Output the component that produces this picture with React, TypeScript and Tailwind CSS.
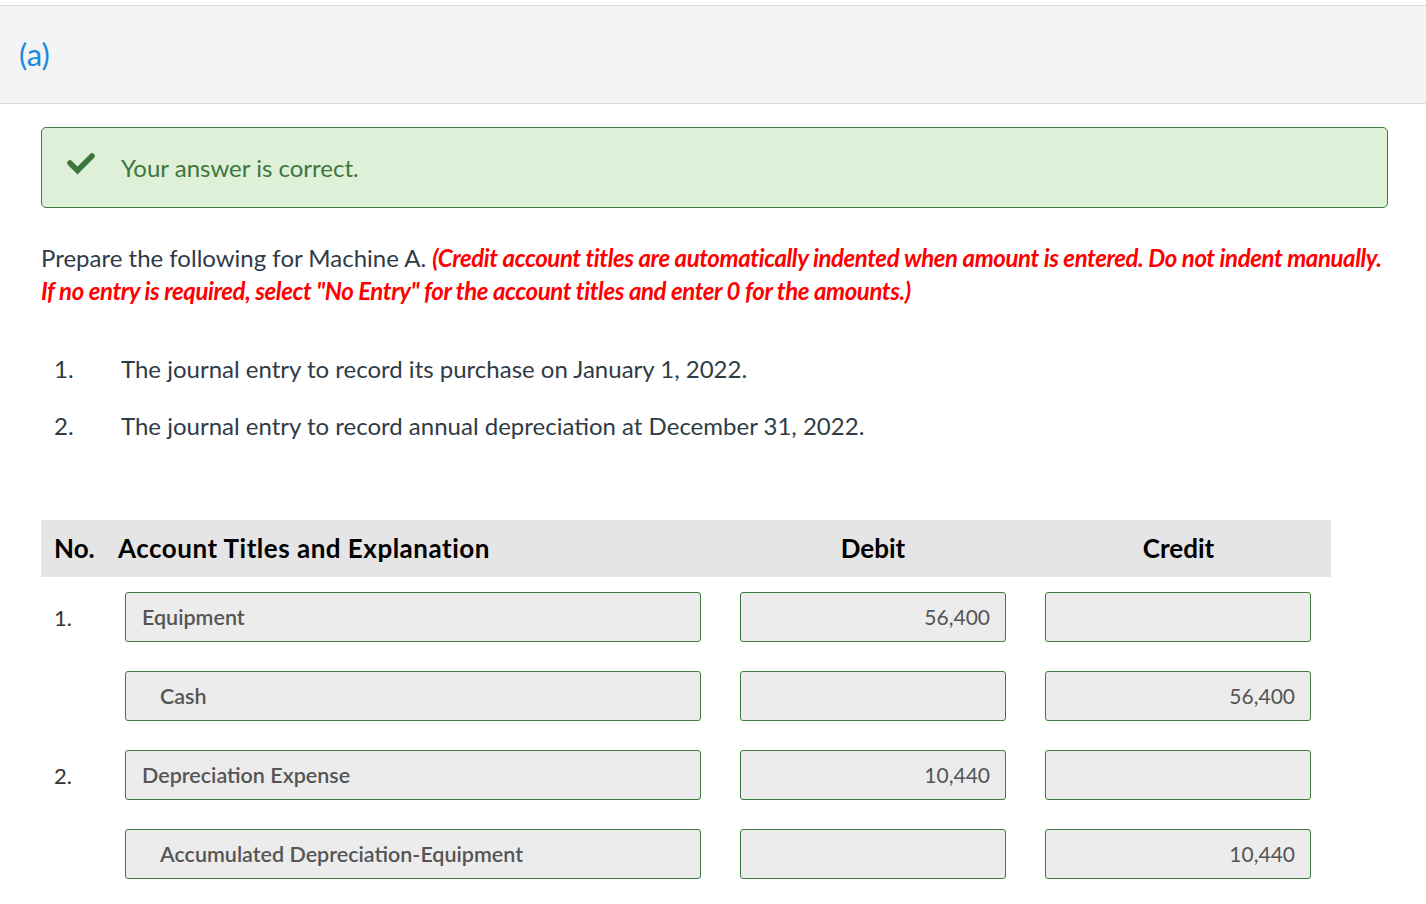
const rows = [
  { no: "1.", account: "Equipment", indent: false, debit: "56,400", credit: "" },
  { no: "", account: "Cash", indent: true, debit: "", credit: "56,400" },
  { no: "2.", account: "Depreciation Expense", indent: false, debit: "10,440", credit: "" },
  { no: "", account: "Accumulated Depreciation-Equipment", indent: true, debit: "", credit: "10,440" },
];

function Field({ children, align = "left", indent = false, bold = false }: { children?: React.ReactNode; align?: "left" | "right"; indent?: boolean; bold?: boolean }) {
  return (
    <div
      className={`h-[50px] flex items-center bg-[#ececec] border border-[#3f7a3f] rounded-[3px] text-[#555] ${
        align === "right" ? "justify-end pr-[15px] text-[21px]" : indent ? "pl-[34px] text-[21.5px]" : "pl-[16px] text-[21.5px]"
      } ${bold ? "font-semibold" : ""}`}
    >
      {children}
    </div>
  );
}

function CheckIcon() {
  return (
    <svg width="30" height="23" viewBox="0 0 30 23" className="-mt-[9px] shrink-0">
      <polyline points="4,11 11.5,18.5 26,4" fill="none" stroke="#3c763d" strokeWidth="5.5" strokeLinecap="round" strokeLinejoin="miter" />
    </svg>
  );
}

export default function App() {
  return (
    <div className="min-h-[904px] bg-white font-['Lato',sans-serif] pt-[5px]">
      {/* Part header */}
      <div className="h-[99px] bg-[#f4f4f4] border-y border-[#dcdcdc] flex items-center px-[19px]">
        <span className="text-[31px] text-[#1a8ae0]">(a)</span>
      </div>

      <div className="pl-[41px] pr-[38px] pt-[23px]">
        {/* Feedback */}
        <div className="h-[81px] bg-[#dff0d8] border border-[#3f7a3f] rounded-[5px] flex items-center pl-[24px]">
          <CheckIcon />
          <span className="ml-[25px] text-[24px] text-[#3c763d]">Your answer is correct.</span>
        </div>

        {/* Instructions */}
        <p className="mt-[33px] text-[24px] leading-[33px] text-[#2f3b46]">
          Prepare the following for Machine A.{" "}
          <span className="text-[#ff0000] font-bold italic tracking-[-0.4px]">
            (Credit account titles are automatically indented when amount is entered. Do not indent manually. If no entry is required, select "No Entry" for the account titles and enter 0 for the amounts.)
          </span>
        </p>

        <ol className="mt-[44px] text-[24px] text-[#2f3b46] space-y-[21px]">
          <li className="flex">
            <span className="w-[80px] pl-[13px]">1.</span>
            <span>The journal entry to record its purchase on January 1, 2022.</span>
          </li>
          <li className="flex">
            <span className="w-[80px] pl-[13px]">2.</span>
            <span>The journal entry to record annual depreciation at December 31, 2022.</span>
          </li>
        </ol>

        {/* Journal table */}
        <div className="mt-[76px] w-[1290px]">
          <div className="h-[57px] bg-[#e5e5e5] grid grid-cols-[77px_602px_306px_305px] items-center text-[26px] font-bold text-black">
            <span className="pl-[13px]">No.</span>
            <span className="tracking-[0.5px]">Account Titles and Explanation</span>
            <span className="text-center">Debit</span>
            <span className="text-center">Credit</span>
          </div>

          <div className="mt-[15px] flex flex-col gap-[29px]">
            {rows.map((r, i) => (
              <div key={i} className="grid grid-cols-[84px_576px_39px_266px_39px_266px] items-center">
                <span className="pl-[13px] text-[22px] text-[#333]">{r.no}</span>
                <Field indent={r.indent} bold>{r.account}</Field>
                <span />
                <Field align="right">{r.debit}</Field>
                <span />
                <Field align="right">{r.credit}</Field>
              </div>
            ))}
          </div>
        </div>
      </div>
    </div>
  );
}
